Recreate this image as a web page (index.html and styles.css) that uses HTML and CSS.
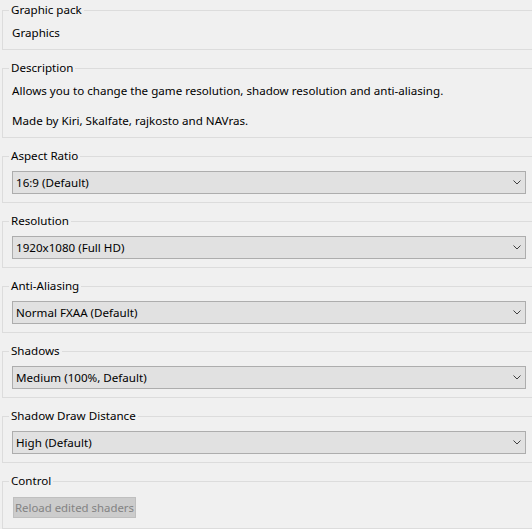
FILE: index.html
```html
<!DOCTYPE html>
<html lang="en">
<head>
    <meta charset="UTF-8">
    <title>Graphic pack</title>
    <link rel="stylesheet" href="styles.css">
</head>
<body>

<fieldset class="group">
    <legend>Graphic pack</legend>
    <p class="line">Graphics</p>
</fieldset>

<fieldset class="group">
    <legend>Description</legend>
    <p class="line">Allows you to change the game resolution, shadow resolution and anti-aliasing.</p>
    <p class="line gap">Made by Kiri, Skalfate, rajkosto and NAVras.</p>
</fieldset>

<fieldset class="group combo-group">
    <legend>Aspect Ratio</legend>
    <div class="combo">
        <span>16:9 (Default)</span>
        <svg class="chevron" width="8" height="5" viewBox="0 0 8 5"><path d="M0.5 0.5 L4 4 L7.5 0.5" /></svg>
    </div>
</fieldset>

<fieldset class="group combo-group">
    <legend>Resolution</legend>
    <div class="combo">
        <span>1920x1080 (Full HD)</span>
        <svg class="chevron" width="8" height="5" viewBox="0 0 8 5"><path d="M0.5 0.5 L4 4 L7.5 0.5" /></svg>
    </div>
</fieldset>

<fieldset class="group combo-group">
    <legend>Anti-Aliasing</legend>
    <div class="combo">
        <span>Normal FXAA (Default)</span>
        <svg class="chevron" width="8" height="5" viewBox="0 0 8 5"><path d="M0.5 0.5 L4 4 L7.5 0.5" /></svg>
    </div>
</fieldset>

<fieldset class="group combo-group">
    <legend>Shadows</legend>
    <div class="combo">
        <span>Medium (100%, Default)</span>
        <svg class="chevron" width="8" height="5" viewBox="0 0 8 5"><path d="M0.5 0.5 L4 4 L7.5 0.5" /></svg>
    </div>
</fieldset>

<fieldset class="group combo-group">
    <legend>Shadow Draw Distance</legend>
    <div class="combo">
        <span>High (Default)</span>
        <svg class="chevron" width="8" height="5" viewBox="0 0 8 5"><path d="M0.5 0.5 L4 4 L7.5 0.5" /></svg>
    </div>
</fieldset>

<fieldset class="group control-group">
    <legend>Control</legend>
    <button class="btn" disabled>Reload edited shaders</button>
</fieldset>

</body>
</html>
```

FILE: styles.css
```css
body {
    margin: 0;
    padding-top: 2px;
    background-color: #f0f0f0;
    font-family: "Noto Sans", "Liberation Sans", sans-serif;
    font-size: 11.6px;
    color: #000;
    overflow: hidden;
}

.group {
    margin: 0 0 10px 2px;
    padding: 7px 0 8px 9px;
    border: 1px solid #dcdcdc;
    border-right: none;
    min-width: 0;
}
.group legend {
    padding: 0 2px;
    margin-left: -3px;
    line-height: 16px;
}

.line {
    margin: 0;
    line-height: 16px;
}
.line.gap {
    margin-top: 14px;
}

.combo-group {
    padding-top: 7px;
    padding-bottom: 8px;
}
.combo {
    display: flex;
    align-items: center;
    justify-content: space-between;
    width: 514px;
    height: 23px;
    box-sizing: border-box;
    padding: 0 4px 0 3px;
    background-color: #e1e1e1;
    border: 1px solid #adadad;
}
.chevron path {
    fill: none;
    stroke: #404040;
    stroke-width: 1;
}

.control-group {
    padding-top: 8px;
    padding-bottom: 10px;
}
.btn {
    display: block;
    margin-left: 1px;
    width: 123px;
    height: 21px;
    padding: 0;
    box-sizing: border-box;
    font-family: inherit;
    font-size: 11.4px;
    color: #838383;
    background-color: #cccccc;
    border: 1px solid #bfbfbf;
    white-space: nowrap;
}
```
